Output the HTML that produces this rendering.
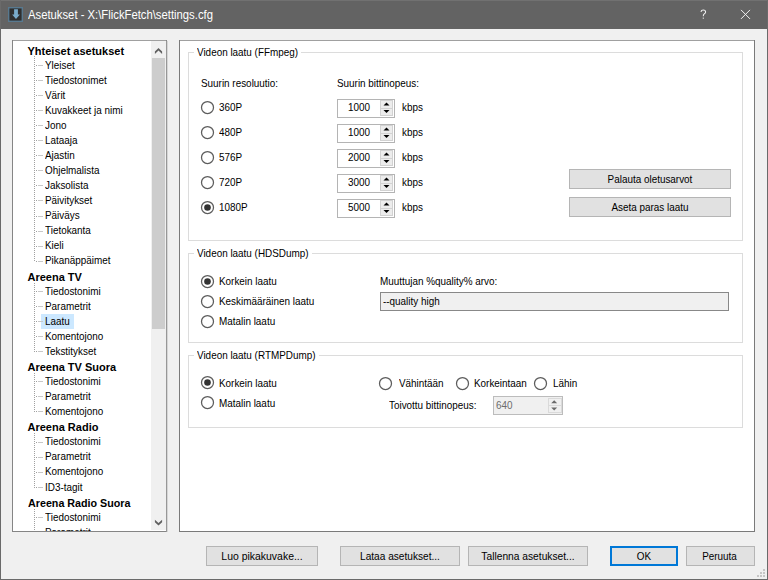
<!DOCTYPE html><html><head><meta charset="utf-8"><style>
html,body{margin:0;padding:0;width:768px;height:580px;overflow:hidden;background:#f0f0f0;}
body{position:relative;font-family:"Liberation Sans", sans-serif;}
.t{position:absolute;white-space:pre;}
.r{position:absolute;box-sizing:border-box;}
.btn{background:#e1e1e1;}
</style></head><body>
<div class="r" style="left:0px;top:0px;width:768px;height:29px;background:#636363;"></div>
<div class="r" style="left:0px;top:0px;width:768px;height:1px;background:#717171;"></div>
<div class="r" style="left:0px;top:0px;width:1px;height:580px;background:#6a6a6a;"></div>
<div class="r" style="left:767px;top:0px;width:1px;height:580px;background:#6a6a6a;"></div>
<div class="r" style="left:0px;top:579px;width:768px;height:1px;background:#6a6a6a;"></div>
<svg class="r" style="left:8px;top:7px" width="15" height="15" viewBox="0 0 15 15"><rect x="0.7" y="0.7" width="13.6" height="13.6" fill="#2f2f2f" stroke="#58798f" stroke-width="1.4"/><path d="M6.1 2.2H9.9V7.4H11.9L8 11.9L4.1 7.4H6.1Z" fill="#7aabcb"/></svg>
<div class="t" style="left:28.00px;top:6.84px;font-size:12px;line-height:16px;font-weight:400;color:#fff;transform:scaleX(0.94);transform-origin:0 0;">Asetukset - X:\FlickFetch\settings.cfg</div>
<svg class="r" style="left:700px;top:9px" width="7" height="11" viewBox="0 0 7 11"><path d="M1.1 3.1C1.1 1.6 2.1 0.9 3.3 0.9C4.6 0.9 5.6 1.7 5.6 2.9C5.6 4.1 4.7 4.6 4.0 5.2C3.4 5.7 3.3 6.1 3.3 7.2" fill="none" stroke="#f2f2f2" stroke-width="1.05"/><rect x="2.75" y="8.6" width="1.1" height="1.1" fill="#f2f2f2"/></svg>
<svg class="r" style="left:740px;top:9px" width="11" height="11" viewBox="0 0 11 11"><path d="M1 0.9L10 9.9M10 0.9L1 9.9" stroke="#f2f2f2" stroke-width="1"/></svg>
<div class="r" style="left:12px;top:40px;width:155px;height:492px;background:#fff;box-shadow:inset 0 0 0 1px #858585;"></div>
<div class="r" style="left:13px;top:40px;width:153px;height:1px;background:#a0a0a0;"></div>
<div class="r" style="left:151px;top:41px;width:15px;height:489px;background:#f0f0f0;"></div>
<div class="r" style="left:152px;top:58px;width:13px;height:271px;background:#cdcdcd;"></div>
<div class="r" style="left:166px;top:41px;width:1px;height:491px;background:#979797;"></div>
<div class="r" style="left:167px;top:41px;width:1px;height:491px;background:#d6d6d6;"></div>
<svg class="r" style="left:151px;top:41px" width="15" height="17" viewBox="0 0 15 17"><path d="M3.9 10.4L7.5 6.9L11.1 10.4V12.9L7.5 9.5L3.9 12.9Z" fill="#606060"/></svg>
<svg class="r" style="left:151px;top:514px" width="15" height="17" viewBox="0 0 15 17"><path d="M3.9 8.2L7.5 11.6L11.1 8.2V5.7L7.5 9.1L3.9 5.7Z" fill="#606060"/></svg>
<div class="r" style="left:13px;top:41px;width:138px;height:490px;overflow:hidden"><div class="r" style="left:-13px;top:-41px;width:768px;height:580px">
<div class="t" style="left:27.50px;top:44.19px;font-size:11px;line-height:14px;font-weight:700;color:#000;">Yhteiset asetukset</div>
<div class="r" style="left:36px;top:65px;width:7px;height:1px;background:linear-gradient(90deg,#a0a0a0 0 1px,#fff 1px 2px,#c8c8c8 2px)"></div>
<div class="t" style="left:45.00px;top:58.19px;font-size:11px;line-height:14px;font-weight:400;color:#000;transform:scaleX(0.9);transform-origin:0 0;">Yleiset</div>
<div class="r" style="left:36px;top:80px;width:7px;height:1px;background:linear-gradient(90deg,#a0a0a0 0 1px,#fff 1px 2px,#c8c8c8 2px)"></div>
<div class="t" style="left:45.00px;top:73.19px;font-size:11px;line-height:14px;font-weight:400;color:#000;transform:scaleX(0.9);transform-origin:0 0;">Tiedostonimet</div>
<div class="r" style="left:36px;top:95px;width:7px;height:1px;background:linear-gradient(90deg,#a0a0a0 0 1px,#fff 1px 2px,#c8c8c8 2px)"></div>
<div class="t" style="left:45.00px;top:88.19px;font-size:11px;line-height:14px;font-weight:400;color:#000;transform:scaleX(0.9);transform-origin:0 0;">Värit</div>
<div class="r" style="left:36px;top:110px;width:7px;height:1px;background:linear-gradient(90deg,#a0a0a0 0 1px,#fff 1px 2px,#c8c8c8 2px)"></div>
<div class="t" style="left:45.00px;top:103.19px;font-size:11px;line-height:14px;font-weight:400;color:#000;transform:scaleX(0.9);transform-origin:0 0;">Kuvakkeet ja nimi</div>
<div class="r" style="left:36px;top:125px;width:7px;height:1px;background:linear-gradient(90deg,#a0a0a0 0 1px,#fff 1px 2px,#c8c8c8 2px)"></div>
<div class="t" style="left:45.00px;top:118.19px;font-size:11px;line-height:14px;font-weight:400;color:#000;transform:scaleX(0.9);transform-origin:0 0;">Jono</div>
<div class="r" style="left:36px;top:140px;width:7px;height:1px;background:linear-gradient(90deg,#a0a0a0 0 1px,#fff 1px 2px,#c8c8c8 2px)"></div>
<div class="t" style="left:45.00px;top:133.19px;font-size:11px;line-height:14px;font-weight:400;color:#000;transform:scaleX(0.9);transform-origin:0 0;">Lataaja</div>
<div class="r" style="left:36px;top:155px;width:7px;height:1px;background:linear-gradient(90deg,#a0a0a0 0 1px,#fff 1px 2px,#c8c8c8 2px)"></div>
<div class="t" style="left:45.00px;top:148.19px;font-size:11px;line-height:14px;font-weight:400;color:#000;transform:scaleX(0.9);transform-origin:0 0;">Ajastin</div>
<div class="r" style="left:36px;top:170px;width:7px;height:1px;background:linear-gradient(90deg,#a0a0a0 0 1px,#fff 1px 2px,#c8c8c8 2px)"></div>
<div class="t" style="left:45.00px;top:163.19px;font-size:11px;line-height:14px;font-weight:400;color:#000;transform:scaleX(0.9);transform-origin:0 0;">Ohjelmalista</div>
<div class="r" style="left:36px;top:185px;width:7px;height:1px;background:linear-gradient(90deg,#a0a0a0 0 1px,#fff 1px 2px,#c8c8c8 2px)"></div>
<div class="t" style="left:45.00px;top:178.19px;font-size:11px;line-height:14px;font-weight:400;color:#000;transform:scaleX(0.9);transform-origin:0 0;">Jaksolista</div>
<div class="r" style="left:36px;top:200px;width:7px;height:1px;background:linear-gradient(90deg,#a0a0a0 0 1px,#fff 1px 2px,#c8c8c8 2px)"></div>
<div class="t" style="left:45.00px;top:193.19px;font-size:11px;line-height:14px;font-weight:400;color:#000;transform:scaleX(0.9);transform-origin:0 0;">Päivitykset</div>
<div class="r" style="left:36px;top:216px;width:7px;height:1px;background:linear-gradient(90deg,#a0a0a0 0 1px,#fff 1px 2px,#c8c8c8 2px)"></div>
<div class="t" style="left:45.00px;top:208.19px;font-size:11px;line-height:14px;font-weight:400;color:#000;transform:scaleX(0.9);transform-origin:0 0;">Päiväys</div>
<div class="r" style="left:36px;top:231px;width:7px;height:1px;background:linear-gradient(90deg,#a0a0a0 0 1px,#fff 1px 2px,#c8c8c8 2px)"></div>
<div class="t" style="left:45.00px;top:223.19px;font-size:11px;line-height:14px;font-weight:400;color:#000;transform:scaleX(0.9);transform-origin:0 0;">Tietokanta</div>
<div class="r" style="left:36px;top:246px;width:7px;height:1px;background:linear-gradient(90deg,#a0a0a0 0 1px,#fff 1px 2px,#c8c8c8 2px)"></div>
<div class="t" style="left:45.00px;top:238.19px;font-size:11px;line-height:14px;font-weight:400;color:#000;transform:scaleX(0.9);transform-origin:0 0;">Kieli</div>
<div class="r" style="left:36px;top:261px;width:7px;height:1px;background:linear-gradient(90deg,#a0a0a0 0 1px,#fff 1px 2px,#c8c8c8 2px)"></div>
<div class="t" style="left:45.00px;top:253.19px;font-size:11px;line-height:14px;font-weight:400;color:#000;transform:scaleX(0.9);transform-origin:0 0;">Pikanäppäimet</div>
<div class="r" style="left:34px;top:56px;width:1px;height:206px;background:repeating-linear-gradient(180deg,#a0a0a0 0 1px,transparent 1px 2px)"></div>
<div class="t" style="left:27.50px;top:270.19px;font-size:11px;line-height:14px;font-weight:700;color:#000;">Areena TV</div>
<div class="r" style="left:36px;top:291px;width:7px;height:1px;background:linear-gradient(90deg,#a0a0a0 0 1px,#fff 1px 2px,#c8c8c8 2px)"></div>
<div class="t" style="left:45.00px;top:284.19px;font-size:11px;line-height:14px;font-weight:400;color:#000;transform:scaleX(0.9);transform-origin:0 0;">Tiedostonimi</div>
<div class="r" style="left:36px;top:306px;width:7px;height:1px;background:linear-gradient(90deg,#a0a0a0 0 1px,#fff 1px 2px,#c8c8c8 2px)"></div>
<div class="t" style="left:45.00px;top:299.19px;font-size:11px;line-height:14px;font-weight:400;color:#000;transform:scaleX(0.9);transform-origin:0 0;">Parametrit</div>
<div class="r" style="left:41px;top:314px;width:33px;height:15px;background:#cce8ff;"></div>
<div class="r" style="left:36px;top:321px;width:7px;height:1px;background:linear-gradient(90deg,#a0a0a0 0 1px,#fff 1px 2px,#c8c8c8 2px)"></div>
<div class="t" style="left:45.00px;top:314.19px;font-size:11px;line-height:14px;font-weight:400;color:#000;transform:scaleX(0.9);transform-origin:0 0;">Laatu</div>
<div class="r" style="left:36px;top:336px;width:7px;height:1px;background:linear-gradient(90deg,#a0a0a0 0 1px,#fff 1px 2px,#c8c8c8 2px)"></div>
<div class="t" style="left:45.00px;top:329.19px;font-size:11px;line-height:14px;font-weight:400;color:#000;transform:scaleX(0.9);transform-origin:0 0;">Komentojono</div>
<div class="r" style="left:36px;top:351px;width:7px;height:1px;background:linear-gradient(90deg,#a0a0a0 0 1px,#fff 1px 2px,#c8c8c8 2px)"></div>
<div class="t" style="left:45.00px;top:344.19px;font-size:11px;line-height:14px;font-weight:400;color:#000;transform:scaleX(0.9);transform-origin:0 0;">Tekstitykset</div>
<div class="r" style="left:34px;top:283px;width:1px;height:69px;background:repeating-linear-gradient(180deg,#a0a0a0 0 1px,transparent 1px 2px)"></div>
<div class="t" style="left:27.50px;top:360.19px;font-size:11px;line-height:14px;font-weight:700;color:#000;">Areena TV Suora</div>
<div class="r" style="left:36px;top:381px;width:7px;height:1px;background:linear-gradient(90deg,#a0a0a0 0 1px,#fff 1px 2px,#c8c8c8 2px)"></div>
<div class="t" style="left:45.00px;top:374.19px;font-size:11px;line-height:14px;font-weight:400;color:#000;transform:scaleX(0.9);transform-origin:0 0;">Tiedostonimi</div>
<div class="r" style="left:36px;top:396px;width:7px;height:1px;background:linear-gradient(90deg,#a0a0a0 0 1px,#fff 1px 2px,#c8c8c8 2px)"></div>
<div class="t" style="left:45.00px;top:389.19px;font-size:11px;line-height:14px;font-weight:400;color:#000;transform:scaleX(0.9);transform-origin:0 0;">Parametrit</div>
<div class="r" style="left:36px;top:411px;width:7px;height:1px;background:linear-gradient(90deg,#a0a0a0 0 1px,#fff 1px 2px,#c8c8c8 2px)"></div>
<div class="t" style="left:45.00px;top:404.19px;font-size:11px;line-height:14px;font-weight:400;color:#000;transform:scaleX(0.9);transform-origin:0 0;">Komentojono</div>
<div class="r" style="left:34px;top:373px;width:1px;height:39px;background:repeating-linear-gradient(180deg,#a0a0a0 0 1px,transparent 1px 2px)"></div>
<div class="t" style="left:27.50px;top:420.19px;font-size:11px;line-height:14px;font-weight:700;color:#000;">Areena Radio</div>
<div class="r" style="left:36px;top:442px;width:7px;height:1px;background:linear-gradient(90deg,#a0a0a0 0 1px,#fff 1px 2px,#c8c8c8 2px)"></div>
<div class="t" style="left:45.00px;top:434.19px;font-size:11px;line-height:14px;font-weight:400;color:#000;transform:scaleX(0.9);transform-origin:0 0;">Tiedostonimi</div>
<div class="r" style="left:36px;top:457px;width:7px;height:1px;background:linear-gradient(90deg,#a0a0a0 0 1px,#fff 1px 2px,#c8c8c8 2px)"></div>
<div class="t" style="left:45.00px;top:449.19px;font-size:11px;line-height:14px;font-weight:400;color:#000;transform:scaleX(0.9);transform-origin:0 0;">Parametrit</div>
<div class="r" style="left:36px;top:472px;width:7px;height:1px;background:linear-gradient(90deg,#a0a0a0 0 1px,#fff 1px 2px,#c8c8c8 2px)"></div>
<div class="t" style="left:45.00px;top:464.19px;font-size:11px;line-height:14px;font-weight:400;color:#000;transform:scaleX(0.9);transform-origin:0 0;">Komentojono</div>
<div class="r" style="left:36px;top:487px;width:7px;height:1px;background:linear-gradient(90deg,#a0a0a0 0 1px,#fff 1px 2px,#c8c8c8 2px)"></div>
<div class="t" style="left:45.00px;top:480.19px;font-size:11px;line-height:14px;font-weight:400;color:#000;transform:scaleX(0.9);transform-origin:0 0;">ID3-tagit</div>
<div class="r" style="left:34px;top:433px;width:1px;height:55px;background:repeating-linear-gradient(180deg,#a0a0a0 0 1px,transparent 1px 2px)"></div>
<div class="t" style="left:27.50px;top:496.19px;font-size:11px;line-height:14px;font-weight:700;color:#000;transform:scaleX(0.975);transform-origin:0 0;">Areena Radio Suora</div>
<div class="r" style="left:36px;top:517px;width:7px;height:1px;background:linear-gradient(90deg,#a0a0a0 0 1px,#fff 1px 2px,#c8c8c8 2px)"></div>
<div class="t" style="left:45.00px;top:510.19px;font-size:11px;line-height:14px;font-weight:400;color:#000;transform:scaleX(0.9);transform-origin:0 0;">Tiedostonimi</div>
<div class="r" style="left:36px;top:532px;width:7px;height:1px;background:linear-gradient(90deg,#a0a0a0 0 1px,#fff 1px 2px,#c8c8c8 2px)"></div>
<div class="t" style="left:45.00px;top:525.19px;font-size:11px;line-height:14px;font-weight:400;color:#000;transform:scaleX(0.9);transform-origin:0 0;">Parametrit</div>
<div class="r" style="left:36px;top:547px;width:7px;height:1px;background:linear-gradient(90deg,#a0a0a0 0 1px,#fff 1px 2px,#c8c8c8 2px)"></div>
<div class="t" style="left:45.00px;top:540.19px;font-size:11px;line-height:14px;font-weight:400;color:#000;transform:scaleX(0.9);transform-origin:0 0;">Komentojono</div>
<div class="r" style="left:34px;top:509px;width:1px;height:39px;background:repeating-linear-gradient(180deg,#a0a0a0 0 1px,transparent 1px 2px)"></div>
</div></div>
<div class="r" style="left:179px;top:40px;width:576px;height:492px;background:#fff;box-shadow:inset 0 0 0 1px #7a7a7a;"></div>
<div class="r" style="left:180px;top:40px;width:574px;height:1px;background:#a0a0a0;"></div>
<div class="r" style="left:188px;top:52px;width:555px;height:189px;box-shadow:inset 0 0 0 1px #dcdcdc;"></div>
<div class="r" style="left:194px;top:51px;width:107px;height:3px;background:#fff;"></div>
<div class="t" style="left:196.50px;top:45.19px;font-size:11px;line-height:14px;font-weight:400;color:#000;transform:scaleX(0.9);transform-origin:0 0;">Videon laatu (FFmpeg)</div>
<div class="r" style="left:188px;top:253px;width:555px;height:90px;box-shadow:inset 0 0 0 1px #dcdcdc;"></div>
<div class="r" style="left:194px;top:252px;width:118px;height:3px;background:#fff;"></div>
<div class="t" style="left:196.50px;top:246.19px;font-size:11px;line-height:14px;font-weight:400;color:#000;transform:scaleX(0.9);transform-origin:0 0;">Videon laatu (HDSDump)</div>
<div class="r" style="left:188px;top:355px;width:555px;height:73px;box-shadow:inset 0 0 0 1px #dcdcdc;"></div>
<div class="r" style="left:194px;top:354px;width:125px;height:3px;background:#fff;"></div>
<div class="t" style="left:196.50px;top:348.19px;font-size:11px;line-height:14px;font-weight:400;color:#000;transform:scaleX(0.9);transform-origin:0 0;">Videon laatu (RTMPDump)</div>
<div class="t" style="left:201.00px;top:76.19px;font-size:11px;line-height:14px;font-weight:400;color:#000;transform:scaleX(0.9);transform-origin:0 0;">Suurin resoluutio:</div>
<div class="t" style="left:337.00px;top:76.19px;font-size:11px;line-height:14px;font-weight:400;color:#000;transform:scaleX(0.9);transform-origin:0 0;">Suurin bittinopeus:</div>
<svg class="r" style="left:200.00px;top:99.50px" width="15" height="15" viewBox="0 0 15 15"><circle cx="7.5" cy="7.5" r="6" fill="#fff" stroke="#5c5c5c" stroke-width="1.25"/></svg>
<div class="t" style="left:218.50px;top:100.19px;font-size:11px;line-height:14px;font-weight:400;color:#000;transform:scaleX(0.9);transform-origin:0 0;">360P</div>
<div class="r" style="left:337px;top:99px;width:58px;height:19px;background:#fff;box-shadow:inset 0 0 0 1px #b4b4b4;"></div>
<div class="t" style="left:338px;top:100.19px;width:35.56px;text-align:right;font-size:11px;line-height:14px;color:#000;transform:scaleX(0.9);transform-origin:0 0">1000</div>
<div class="r" style="left:380px;top:100px;width:13px;height:9px;background:#ececec;box-shadow:inset 0 0 0 1px #d2d2d2;"></div>
<div class="r" style="left:380px;top:108px;width:13px;height:8px;background:#ececec;box-shadow:inset 0 0 0 1px #d2d2d2;"></div>
<svg class="r" style="left:380px;top:100px" width="13" height="16" viewBox="0 0 13 16"><path d="M3.5 5.5L6.5 2.5L9.5 5.5z" fill="#000"/><path d="M3.5 10L6.5 13L9.5 10z" fill="#000"/></svg>
<div class="t" style="left:402.00px;top:100.19px;font-size:11px;line-height:14px;font-weight:400;color:#000;transform:scaleX(0.9);transform-origin:0 0;">kbps</div>
<svg class="r" style="left:200.00px;top:124.50px" width="15" height="15" viewBox="0 0 15 15"><circle cx="7.5" cy="7.5" r="6" fill="#fff" stroke="#5c5c5c" stroke-width="1.25"/></svg>
<div class="t" style="left:218.50px;top:125.19px;font-size:11px;line-height:14px;font-weight:400;color:#000;transform:scaleX(0.9);transform-origin:0 0;">480P</div>
<div class="r" style="left:337px;top:124px;width:58px;height:19px;background:#fff;box-shadow:inset 0 0 0 1px #b4b4b4;"></div>
<div class="t" style="left:338px;top:125.19px;width:35.56px;text-align:right;font-size:11px;line-height:14px;color:#000;transform:scaleX(0.9);transform-origin:0 0">1000</div>
<div class="r" style="left:380px;top:125px;width:13px;height:9px;background:#ececec;box-shadow:inset 0 0 0 1px #d2d2d2;"></div>
<div class="r" style="left:380px;top:133px;width:13px;height:8px;background:#ececec;box-shadow:inset 0 0 0 1px #d2d2d2;"></div>
<svg class="r" style="left:380px;top:125px" width="13" height="16" viewBox="0 0 13 16"><path d="M3.5 5.5L6.5 2.5L9.5 5.5z" fill="#000"/><path d="M3.5 10L6.5 13L9.5 10z" fill="#000"/></svg>
<div class="t" style="left:402.00px;top:125.19px;font-size:11px;line-height:14px;font-weight:400;color:#000;transform:scaleX(0.9);transform-origin:0 0;">kbps</div>
<svg class="r" style="left:200.00px;top:149.50px" width="15" height="15" viewBox="0 0 15 15"><circle cx="7.5" cy="7.5" r="6" fill="#fff" stroke="#5c5c5c" stroke-width="1.25"/></svg>
<div class="t" style="left:218.50px;top:150.19px;font-size:11px;line-height:14px;font-weight:400;color:#000;transform:scaleX(0.9);transform-origin:0 0;">576P</div>
<div class="r" style="left:337px;top:149px;width:58px;height:19px;background:#fff;box-shadow:inset 0 0 0 1px #b4b4b4;"></div>
<div class="t" style="left:338px;top:150.19px;width:35.56px;text-align:right;font-size:11px;line-height:14px;color:#000;transform:scaleX(0.9);transform-origin:0 0">2000</div>
<div class="r" style="left:380px;top:150px;width:13px;height:9px;background:#ececec;box-shadow:inset 0 0 0 1px #d2d2d2;"></div>
<div class="r" style="left:380px;top:158px;width:13px;height:8px;background:#ececec;box-shadow:inset 0 0 0 1px #d2d2d2;"></div>
<svg class="r" style="left:380px;top:150px" width="13" height="16" viewBox="0 0 13 16"><path d="M3.5 5.5L6.5 2.5L9.5 5.5z" fill="#000"/><path d="M3.5 10L6.5 13L9.5 10z" fill="#000"/></svg>
<div class="t" style="left:402.00px;top:150.19px;font-size:11px;line-height:14px;font-weight:400;color:#000;transform:scaleX(0.9);transform-origin:0 0;">kbps</div>
<svg class="r" style="left:200.00px;top:174.50px" width="15" height="15" viewBox="0 0 15 15"><circle cx="7.5" cy="7.5" r="6" fill="#fff" stroke="#5c5c5c" stroke-width="1.25"/></svg>
<div class="t" style="left:218.50px;top:175.19px;font-size:11px;line-height:14px;font-weight:400;color:#000;transform:scaleX(0.9);transform-origin:0 0;">720P</div>
<div class="r" style="left:337px;top:174px;width:58px;height:19px;background:#fff;box-shadow:inset 0 0 0 1px #b4b4b4;"></div>
<div class="t" style="left:338px;top:175.19px;width:35.56px;text-align:right;font-size:11px;line-height:14px;color:#000;transform:scaleX(0.9);transform-origin:0 0">3000</div>
<div class="r" style="left:380px;top:175px;width:13px;height:9px;background:#ececec;box-shadow:inset 0 0 0 1px #d2d2d2;"></div>
<div class="r" style="left:380px;top:183px;width:13px;height:8px;background:#ececec;box-shadow:inset 0 0 0 1px #d2d2d2;"></div>
<svg class="r" style="left:380px;top:175px" width="13" height="16" viewBox="0 0 13 16"><path d="M3.5 5.5L6.5 2.5L9.5 5.5z" fill="#000"/><path d="M3.5 10L6.5 13L9.5 10z" fill="#000"/></svg>
<div class="t" style="left:402.00px;top:175.19px;font-size:11px;line-height:14px;font-weight:400;color:#000;transform:scaleX(0.9);transform-origin:0 0;">kbps</div>
<svg class="r" style="left:200.00px;top:199.50px" width="15" height="15" viewBox="0 0 15 15"><circle cx="7.5" cy="7.5" r="6" fill="#fff" stroke="#5c5c5c" stroke-width="1.25"/><circle cx="7.5" cy="7.5" r="3.3" fill="#333"/></svg>
<div class="t" style="left:218.50px;top:200.19px;font-size:11px;line-height:14px;font-weight:400;color:#000;transform:scaleX(0.9);transform-origin:0 0;">1080P</div>
<div class="r" style="left:337px;top:199px;width:58px;height:19px;background:#fff;box-shadow:inset 0 0 0 1px #b4b4b4;"></div>
<div class="t" style="left:338px;top:200.19px;width:35.56px;text-align:right;font-size:11px;line-height:14px;color:#000;transform:scaleX(0.9);transform-origin:0 0">5000</div>
<div class="r" style="left:380px;top:200px;width:13px;height:9px;background:#ececec;box-shadow:inset 0 0 0 1px #d2d2d2;"></div>
<div class="r" style="left:380px;top:208px;width:13px;height:8px;background:#ececec;box-shadow:inset 0 0 0 1px #d2d2d2;"></div>
<svg class="r" style="left:380px;top:200px" width="13" height="16" viewBox="0 0 13 16"><path d="M3.5 5.5L6.5 2.5L9.5 5.5z" fill="#000"/><path d="M3.5 10L6.5 13L9.5 10z" fill="#000"/></svg>
<div class="t" style="left:402.00px;top:200.19px;font-size:11px;line-height:14px;font-weight:400;color:#000;transform:scaleX(0.9);transform-origin:0 0;">kbps</div>
<div class="r btn" style="left:569px;top:169px;width:162px;height:20px;box-shadow:inset 0 0 0 1px #b5b5b5;"></div>
<div class="t" style="left:569px;top:172.19px;width:180.00px;text-align:center;font-size:11px;line-height:14px;color:#000;transform:scaleX(0.9);transform-origin:0 0">Palauta oletusarvot</div>
<div class="r btn" style="left:569px;top:197px;width:162px;height:20px;box-shadow:inset 0 0 0 1px #b5b5b5;"></div>
<div class="t" style="left:569px;top:200.19px;width:180.00px;text-align:center;font-size:11px;line-height:14px;color:#000;transform:scaleX(0.9);transform-origin:0 0">Aseta paras laatu</div>
<svg class="r" style="left:200.00px;top:273.50px" width="15" height="15" viewBox="0 0 15 15"><circle cx="7.5" cy="7.5" r="6" fill="#fff" stroke="#5c5c5c" stroke-width="1.25"/><circle cx="7.5" cy="7.5" r="3.3" fill="#333"/></svg>
<div class="t" style="left:218.50px;top:274.19px;font-size:11px;line-height:14px;font-weight:400;color:#000;transform:scaleX(0.9);transform-origin:0 0;">Korkein laatu</div>
<svg class="r" style="left:200.00px;top:293.50px" width="15" height="15" viewBox="0 0 15 15"><circle cx="7.5" cy="7.5" r="6" fill="#fff" stroke="#5c5c5c" stroke-width="1.25"/></svg>
<div class="t" style="left:218.50px;top:294.19px;font-size:11px;line-height:14px;font-weight:400;color:#000;transform:scaleX(0.9);transform-origin:0 0;">Keskimääräinen laatu</div>
<svg class="r" style="left:200.00px;top:313.50px" width="15" height="15" viewBox="0 0 15 15"><circle cx="7.5" cy="7.5" r="6" fill="#fff" stroke="#5c5c5c" stroke-width="1.25"/></svg>
<div class="t" style="left:218.50px;top:314.19px;font-size:11px;line-height:14px;font-weight:400;color:#000;transform:scaleX(0.9);transform-origin:0 0;">Matalin laatu</div>
<div class="t" style="left:379.50px;top:274.19px;font-size:11px;line-height:14px;font-weight:400;color:#000;transform:scaleX(0.9);transform-origin:0 0;">Muuttujan %quality% arvo:</div>
<div class="r" style="left:380px;top:292px;width:349px;height:19px;background:#f0f0f0;box-shadow:inset 0 0 0 1px #888;"></div>
<div class="t" style="left:383.00px;top:294.19px;font-size:11px;line-height:14px;font-weight:400;color:#000;transform:scaleX(0.9);transform-origin:0 0;">--quality high</div>
<svg class="r" style="left:200.00px;top:375.00px" width="15" height="15" viewBox="0 0 15 15"><circle cx="7.5" cy="7.5" r="6" fill="#fff" stroke="#5c5c5c" stroke-width="1.25"/><circle cx="7.5" cy="7.5" r="3.3" fill="#333"/></svg>
<div class="t" style="left:218.50px;top:375.69px;font-size:11px;line-height:14px;font-weight:400;color:#000;transform:scaleX(0.9);transform-origin:0 0;">Korkein laatu</div>
<svg class="r" style="left:200.00px;top:395.00px" width="15" height="15" viewBox="0 0 15 15"><circle cx="7.5" cy="7.5" r="6" fill="#fff" stroke="#5c5c5c" stroke-width="1.25"/></svg>
<div class="t" style="left:218.50px;top:395.69px;font-size:11px;line-height:14px;font-weight:400;color:#000;transform:scaleX(0.9);transform-origin:0 0;">Matalin laatu</div>
<svg class="r" style="left:378.00px;top:375.50px" width="15" height="15" viewBox="0 0 15 15"><circle cx="7.5" cy="7.5" r="6" fill="#fff" stroke="#5c5c5c" stroke-width="1.25"/></svg>
<div class="t" style="left:398.50px;top:376.19px;font-size:11px;line-height:14px;font-weight:400;color:#000;transform:scaleX(0.9);transform-origin:0 0;">Vähintään</div>
<svg class="r" style="left:454.50px;top:375.50px" width="15" height="15" viewBox="0 0 15 15"><circle cx="7.5" cy="7.5" r="6" fill="#fff" stroke="#5c5c5c" stroke-width="1.25"/></svg>
<div class="t" style="left:473.50px;top:376.19px;font-size:11px;line-height:14px;font-weight:400;color:#000;transform:scaleX(0.9);transform-origin:0 0;">Korkeintaan</div>
<svg class="r" style="left:532.80px;top:375.50px" width="15" height="15" viewBox="0 0 15 15"><circle cx="7.5" cy="7.5" r="6" fill="#fff" stroke="#5c5c5c" stroke-width="1.25"/></svg>
<div class="t" style="left:553.00px;top:376.19px;font-size:11px;line-height:14px;font-weight:400;color:#000;transform:scaleX(0.9);transform-origin:0 0;">Lähin</div>
<div class="t" style="left:389.00px;top:397.69px;font-size:11px;line-height:14px;font-weight:400;color:#000;transform:scaleX(0.9);transform-origin:0 0;">Toivottu bittinopeus:</div>
<div class="r" style="left:493px;top:396px;width:70px;height:19px;background:#f0f0f0;box-shadow:inset 0 0 0 1px #bcbcbc;"></div>
<div class="t" style="left:495.50px;top:398.19px;font-size:11px;line-height:14px;font-weight:400;color:#6d6d6d;transform:scaleX(0.9);transform-origin:0 0;">640</div>
<div class="r" style="left:548px;top:398px;width:14px;height:8px;background:#f0f0f0;box-shadow:inset 0 0 0 1px #dadada;"></div>
<div class="r" style="left:548px;top:405px;width:14px;height:8px;background:#f0f0f0;box-shadow:inset 0 0 0 1px #dadada;"></div>
<svg class="r" style="left:548px;top:398px" width="14" height="15" viewBox="0 0 14 15"><path d="M3.2 5.2L6.2 2.3L9.2 5.2z" fill="#6a6a6a"/><path d="M3.2 9.6L6.2 12.5L9.2 9.6z" fill="#6a6a6a"/></svg>
<div class="r btn" style="left:206px;top:546px;width:112px;height:20px;box-shadow:inset 0 0 0 1px #b5b5b5;"></div>
<div class="t" style="left:206px;top:549.19px;width:117.89px;text-align:center;font-size:11px;line-height:14px;color:#000;transform:scaleX(0.95);transform-origin:0 0">Luo pikakuvake...</div>
<div class="r btn" style="left:340px;top:546px;width:120px;height:20px;box-shadow:inset 0 0 0 1px #b5b5b5;"></div>
<div class="t" style="left:340px;top:549.19px;width:130.43px;text-align:center;font-size:11px;line-height:14px;color:#000;transform:scaleX(0.92);transform-origin:0 0">Lataa asetukset...</div>
<div class="r btn" style="left:468px;top:546px;width:120px;height:20px;box-shadow:inset 0 0 0 1px #b5b5b5;"></div>
<div class="t" style="left:468px;top:549.19px;width:129.03px;text-align:center;font-size:11px;line-height:14px;color:#000;transform:scaleX(0.93);transform-origin:0 0">Tallenna asetukset...</div>
<div class="r btn" style="left:610px;top:546px;width:68px;height:20px;box-shadow:inset 0 0 0 2px #0078d7;"></div>
<div class="t" style="left:610px;top:549.19px;width:75.56px;text-align:center;font-size:11px;line-height:14px;color:#000;transform:scaleX(0.9);transform-origin:0 0">OK</div>
<div class="r btn" style="left:686px;top:546px;width:69px;height:20px;box-shadow:inset 0 0 0 1px #b5b5b5;"></div>
<div class="t" style="left:685px;top:549.19px;width:76.67px;text-align:center;font-size:11px;line-height:14px;color:#000;transform:scaleX(0.9);transform-origin:0 0">Peruuta</div>
<div class="r" style="left:763px;top:569px;width:2px;height:2px;background:#c6c6c6"></div><div class="r" style="left:760px;top:572px;width:2px;height:2px;background:#c6c6c6"></div><div class="r" style="left:763px;top:572px;width:2px;height:2px;background:#c6c6c6"></div><div class="r" style="left:757px;top:575px;width:2px;height:2px;background:#c6c6c6"></div><div class="r" style="left:760px;top:575px;width:2px;height:2px;background:#c6c6c6"></div><div class="r" style="left:763px;top:575px;width:2px;height:2px;background:#c6c6c6"></div>
</body></html>
